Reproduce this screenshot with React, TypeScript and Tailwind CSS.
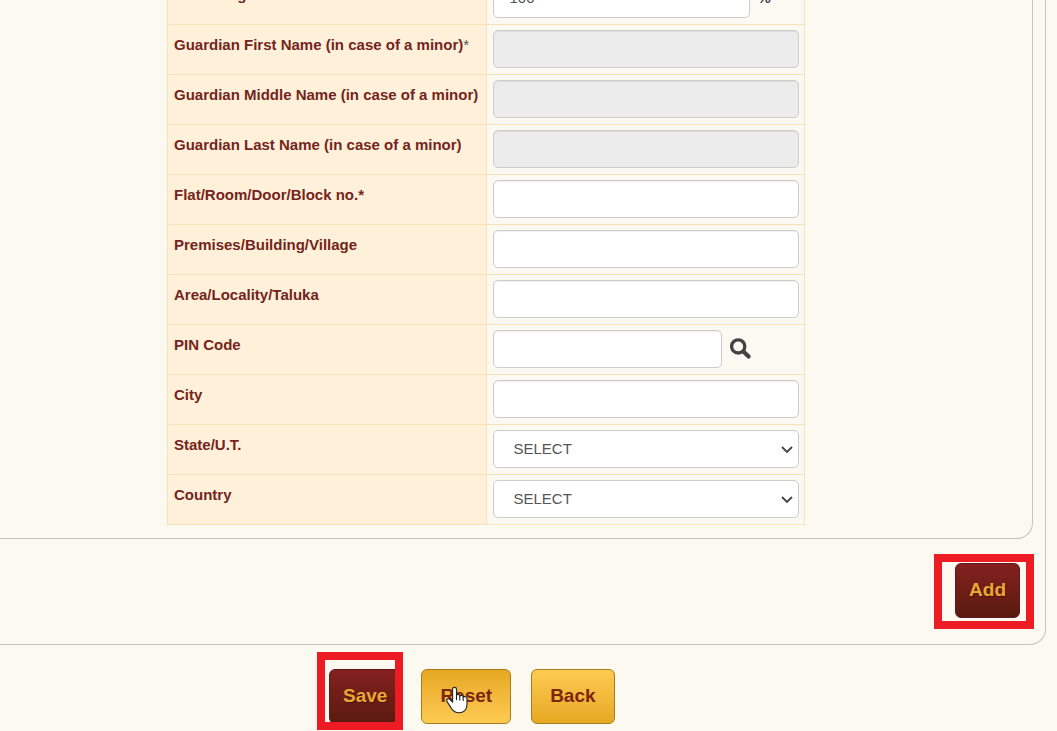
import type { ReactNode } from "react";

const inputBase =
  "block h-[38px] rounded-[5px] border border-[#ccc] px-4 pb-1 text-[15px] font-normal text-[#555] shadow-[inset_0_1px_1px_rgba(0,0,0,0.06)] outline-none";

function Row({ id, label, star, children }: { id: string; label: string; star?: ReactNode; children: ReactNode }) {
  return (
    <tr>
      <th
        scope="row"
        className="w-1/2 border border-[#f9e1b8] bg-[#fff1d9] px-1.5 pt-[10px] text-left align-top text-[15px] leading-5 font-bold text-[#74241c]"
      >
        <label htmlFor={id}>{label}</label>
        {star}
      </th>
      <td className="border border-[#f9e1b8] bg-[#fcf9f2] pt-[5px] pr-[5px] pb-[6px] pl-1.5 align-top">{children}</td>
    </tr>
  );
}

function TextField({ id, disabled }: { id: string; disabled?: boolean }) {
  return <input id={id} type="text" disabled={disabled} className={`${inputBase} w-full ${disabled ? "bg-[#ececec]" : "bg-white"}`} />;
}

function SelectField({ id }: { id: string }) {
  return (
    <div className="relative">
      <select id={id} className="block h-[38px] w-full appearance-none rounded-[5px] border border-[#ccc] bg-white px-5 text-[15px] text-[#555] outline-none">
        <option>SELECT</option>
      </select>
      <svg className="pointer-events-none absolute top-4 right-1.5 h-2 w-3" viewBox="0 0 12 8" fill="none" stroke="#444" strokeWidth="1.8">
        <path d="M1 1l5 5 5-5" />
      </svg>
    </div>
  );
}

function SearchIcon() {
  return (
    <svg className="h-[22px] w-[22px]" viewBox="0 0 22 22" fill="none" stroke="#424242">
      <circle cx="8.2" cy="8.4" r="6.6" strokeWidth="3.3" />
      <path d="M13.4 13.4l5.2 5.200" strokeWidth="4.2" strokeLinecap="round" />
    </svg>
  );
}

function HandPointer() {
  return (
    <svg className="pointer-events-none absolute top-[17px] left-[25px] h-7 w-6" viewBox="0 0 24 28" fill="#fff" stroke="#222" strokeWidth="1.1" strokeLinejoin="round" strokeLinecap="round">
      <path d="M6.600 3C6.600.8 10.400.8 10.500 3V9.200C11.200 7.800 13.600 8.200 13.800 9.900C14.600 8.900 17 9.300 17.200 10.900C18.400 10.200 21 10.800 21 12.800V18.200C21 23.600 17.600 26.800 13 26.800C8.600 26.800 6.600 24.600 4.800 21.400L.9 15.400C0 13.400 2.200 11.800 3.800 13.400L6.600 16.200Z" />
      <path d="M10.500 9.200v4.600M13.800 9.900v4.200M17.200 10.900v3.600" fill="none" />
    </svg>
  );
}

const maroon =
  "h-[55px] rounded-[6px] border border-[#5d1a22] bg-linear-to-b from-[#85201f] to-[#591b0f] px-[13px] text-[19px] font-bold text-[#e9a735] [text-shadow:1px_1px_1px_#4a120c]";
const gold = "h-[55px] rounded-[6px] border border-[#a67c1c] px-[18px] text-[19px] font-bold text-[#7b2611]";

export default function App() {
  return (
    <div className="h-screen overflow-hidden bg-[#fcf9f1] font-['Liberation_Sans',Arial,sans-serif]">
      <main className="-mt-[27px]">
        <section className="mr-[11px] rounded-br-[16px] border-r border-b border-[#c6c4bd] pb-[26px]">
          <div className="mr-3 rounded-br-[16px] border-r border-b border-[#c6c4bd] pb-[13px] pl-[167px]">
            <table className="mt-px w-[638px] table-fixed border-collapse">
              <tbody>
                <Row id="share" label="Percentage Share">
                  <div className="flex items-center gap-2 text-[15px] font-bold text-[#444]">
                    <input id="share" type="text" defaultValue="100" className={`${inputBase} w-[257px] bg-white`} />
                    <span className="pb-[2px]">%</span>
                  </div>
                </Row>
                <Row id="gfirst" label="Guardian First Name (in case of a minor)" star={<span className="font-normal text-[#555]">*</span>}>
                  <TextField id="gfirst" disabled />
                </Row>
                <Row id="gmiddle" label="Guardian Middle Name (in case of a minor)">
                  <TextField id="gmiddle" disabled />
                </Row>
                <Row id="glast" label="Guardian Last Name (in case of a minor)">
                  <TextField id="glast" disabled />
                </Row>
                <Row id="flat" label="Flat/Room/Door/Block no." star="*">
                  <TextField id="flat" />
                </Row>
                <Row id="premises" label="Premises/Building/Village">
                  <TextField id="premises" />
                </Row>
                <Row id="area" label="Area/Locality/Taluka">
                  <TextField id="area" />
                </Row>
                <Row id="pin" label="PIN Code">
                  <div className="flex items-center gap-2">
                    <input id="pin" type="text" className={`${inputBase} w-[229px] bg-white`} />
                    <button type="button" aria-label="Search PIN code">
                      <SearchIcon />
                    </button>
                  </div>
                </Row>
                <Row id="city" label="City">
                  <TextField id="city" />
                </Row>
                <Row id="state" label="State/U.T.">
                  <SelectField id="state" />
                </Row>
                <Row id="country" label="Country">
                  <SelectField id="country" />
                </Row>
              </tbody>
            </table>
          </div>
          <div className="mt-6 flex justify-end pr-[25px]">
            <div className="relative">
              <button type="button" className={maroon}>Add</button>
              <span className="pointer-events-none absolute -top-[9px] -right-[14px] -bottom-[11px] -left-[21px] border-8 border-[#ed1c24]" />
            </div>
          </div>
        </section>
        <div className="mt-6 flex gap-5 pl-[329px]">
          <div className="relative">
            <button type="button" className={maroon}>Save</button>
            <span className="pointer-events-none absolute -top-[17px] -right-[2px] -bottom-[6px] -left-3 border-8 border-[#ed1c24]" />
          </div>
          <div className="relative">
            <button type="button" className={`${gold} bg-linear-to-b from-[#e6a820] to-[#fecb52]`}>Reset</button>
            <HandPointer />
          </div>
          <button type="button" className={`${gold} bg-linear-to-b from-[#fecb52] to-[#e6a820]`}>Back</button>
        </div>
      </main>
    </div>
  );
}
